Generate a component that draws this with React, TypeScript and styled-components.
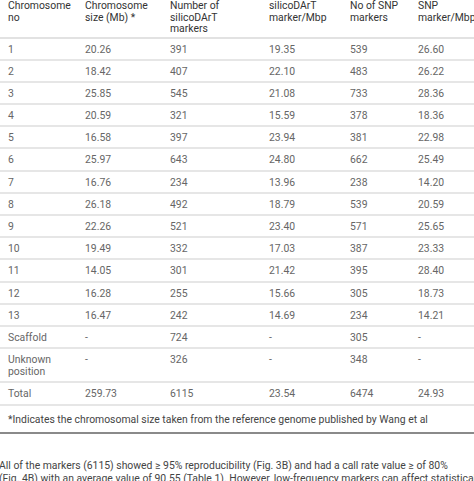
import React from 'react'
import styled, { createGlobalStyle } from 'styled-components'

const GlobalStyle = createGlobalStyle`
  html, body {
    margin: 0;
    padding: 0;
    background: #ffffff;
    overflow: hidden;
  }
  body {
    font-family: Roboto, "Liberation Sans", Arial, sans-serif;
  }
`

const Page = styled.div`
  width: 474px;
  height: 481px;
  overflow: hidden;
`

const Table = styled.table`
  border-collapse: collapse;
  table-layout: fixed;
  width: 474px;
  font-size: 10.4px;
`

const HeadCell = styled.th<{ $w: number }>`
  box-sizing: border-box;
  width: ${(p) => p.$w}px;
  text-align: left;
  vertical-align: top;
  font-weight: 400;
  color: #333;
  line-height: 11.5px;
  padding: 0 4px 2px 8px;
  height: 37px;
  border-bottom: 2px solid #e2e2e2;
`

const Cell = styled.td`
  box-sizing: border-box;
  text-align: left;
  vertical-align: top;
  color: #666;
  line-height: 12px;
  padding: 5px 4px 3.2px 8px;
  border-bottom: 2px solid #e6e6e6;
`

const NoteCell = styled.td`
  color: #444;
  line-height: 12px;
  padding: 8px 8px 6px 8px;
  border-bottom: 2px solid #8a8a8a;
`

const Paragraph = styled.p`
  margin: 25px 0 0 -1px;
  font-size: 10.4px;
  line-height: 13.5px;
  color: #444;
  white-space: nowrap;
`

const columns = [
  { label: 'Chromosome no', w: 77 },
  { label: 'Chromosome size (Mb) *', w: 85 },
  { label: 'Number of silicoDArT markers', w: 99 },
  { label: 'silicoDArT marker/Mbp', w: 81 },
  { label: 'No of SNP markers', w: 68 },
  { label: 'SNP marker/Mbp', w: 64 },
]

const rows: string[][] = [
  ['1', '20.26', '391', '19.35', '539', '26.60'],
  ['2', '18.42', '407', '22.10', '483', '26.22'],
  ['3', '25.85', '545', '21.08', '733', '28.36'],
  ['4', '20.59', '321', '15.59', '378', '18.36'],
  ['5', '16.58', '397', '23.94', '381', '22.98'],
  ['6', '25.97', '643', '24.80', '662', '25.49'],
  ['7', '16.76', '234', '13.96', '238', '14.20'],
  ['8', '26.18', '492', '18.79', '539', '20.59'],
  ['9', '22.26', '521', '23.40', '571', '25.65'],
  ['10', '19.49', '332', '17.03', '387', '23.33'],
  ['11', '14.05', '301', '21.42', '395', '28.40'],
  ['12', '16.28', '255', '15.66', '305', '18.73'],
  ['13', '16.47', '242', '14.69', '234', '14.21'],
  ['Scaffold', '-', '724', '-', '305', '-'],
  ['Unknown position', '-', '326', '-', '348', '-'],
  ['Total', '259.73', '6115', '23.54', '6474', '24.93'],
]

export default function App() {
  return (
    <Page>
      <GlobalStyle />
      <Table>
        <thead>
          <tr>
            {columns.map((c) => (
              <HeadCell key={c.label} $w={c.w}>
                {c.label}
              </HeadCell>
            ))}
          </tr>
        </thead>
        <tbody>
          {rows.map((r, i) => (
            <tr key={i}>
              {r.map((v, j) => (
                <Cell key={j}>{v}</Cell>
              ))}
            </tr>
          ))}
          <tr>
            <NoteCell colSpan={6}>
              *Indicates the chromosomal size taken from the reference genome published by Wang et al
            </NoteCell>
          </tr>
        </tbody>
      </Table>
      <Paragraph>
        All of the markers (6115) showed ≥ 95% reproducibility (Fig. 3B) and had a call rate value ≥ of 80%
        <br />
        (Fig. 4B) with an average value of 90.55 (Table 1). However, low-frequency markers can affect statistical
      </Paragraph>
    </Page>
  )
}
